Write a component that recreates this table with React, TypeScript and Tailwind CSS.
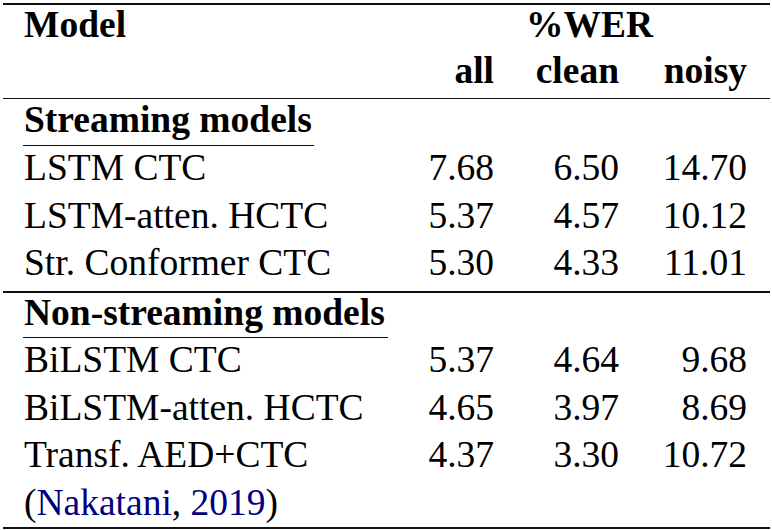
import React from "react";

type Row = { name: React.ReactNode; all: string; clean: string; noisy: string };

const streaming: Row[] = [
  { name: "LSTM CTC", all: "7.68", clean: "6.50", noisy: "14.70" },
  { name: "LSTM-atten. HCTC", all: "5.37", clean: "4.57", noisy: "10.12" },
  { name: "Str. Conformer CTC", all: "5.30", clean: "4.33", noisy: "11.01" },
];

const nonStreaming: Row[] = [
  { name: "BiLSTM CTC", all: "5.37", clean: "4.64", noisy: "9.68" },
  { name: "BiLSTM-atten. HCTC", all: "4.65", clean: "3.97", noisy: "8.69" },
  { name: "Transf. AED+CTC", all: "4.37", clean: "3.30", noisy: "10.72" },
];

// columns: model cell 3→394, then right-aligned numbers ending at 494 / 619 / 747
function Cells({ a, b, c }: { a: React.ReactNode; b: React.ReactNode; c: React.ReactNode }) {
  return (
    <>
      <div className="w-[100px] text-right">{a}</div>
      <div className="w-[125px] text-right">{b}</div>
      <div className="w-[128px] text-right">{c}</div>
    </>
  );
}

function DataRow({ row }: { row: Row }) {
  return (
    <div className="flex h-[47.6px] pt-[2px] leading-[40px]">
      <div className="w-[391px] pl-[21px] whitespace-nowrap">{row.name}</div>
      <Cells a={row.all} b={row.clean} c={row.noisy} />
    </div>
  );
}

export default function App() {
  return (
    <div
      className="w-[772px] h-[530px] bg-white text-black text-[37.5px] pt-[3px] overflow-hidden"
      style={{ fontFamily: '"Liberation Serif", "Times New Roman", serif' }}
    >
      <div className="ml-[3px] w-[767px]">
        {/* toprule */}
        <div className="h-[2px] bg-[#111]" />

        {/* header */}
        <div className="flex h-[40px] leading-[40px] font-bold">
          <div className="w-[391px] pl-[21px]">Model</div>
          <div className="pl-[132px]">%WER</div>
        </div>
        <div className="flex mt-[6px] h-[40px] leading-[40px] font-bold">
          <div className="w-[391px]" />
          <Cells a="all" b="clean" c="noisy" />
        </div>

        {/* midrule */}
        <div className="mt-[6.5px] h-[1.5px] bg-[#111]" />

        <div className="h-[41px] leading-[41px] pl-[21px] font-bold whitespace-nowrap">
          Streaming models
        </div>
        <div className="mt-[5px] ml-[20px] w-[291px] h-px bg-[#111]" />
        {streaming.map((r) => (
          <DataRow key={r.all + r.noisy} row={r} />
        ))}

        <div className="mt-[2.7px] h-[1.5px] bg-[#111]" />

        <div className="h-[40px] leading-[40px] pl-[21px] font-bold whitespace-nowrap">
          Non-streaming models
        </div>
        <div className="mt-[4px] ml-[20px] w-[365px] h-px bg-[#111]" />
        {nonStreaming.map((r) => (
          <DataRow key={r.all + r.noisy} row={r} />
        ))}
        <div className="h-[46px] pt-[2px] leading-[40px] pl-[21px] whitespace-nowrap">
          (<span className="text-[#000080]">Nakatani</span>,{" "}
          <span className="text-[#000080]">2019</span>)
        </div>

        {/* bottomrule */}
        <div className="h-[2px] bg-[#111]" />
      </div>
    </div>
  );
}
